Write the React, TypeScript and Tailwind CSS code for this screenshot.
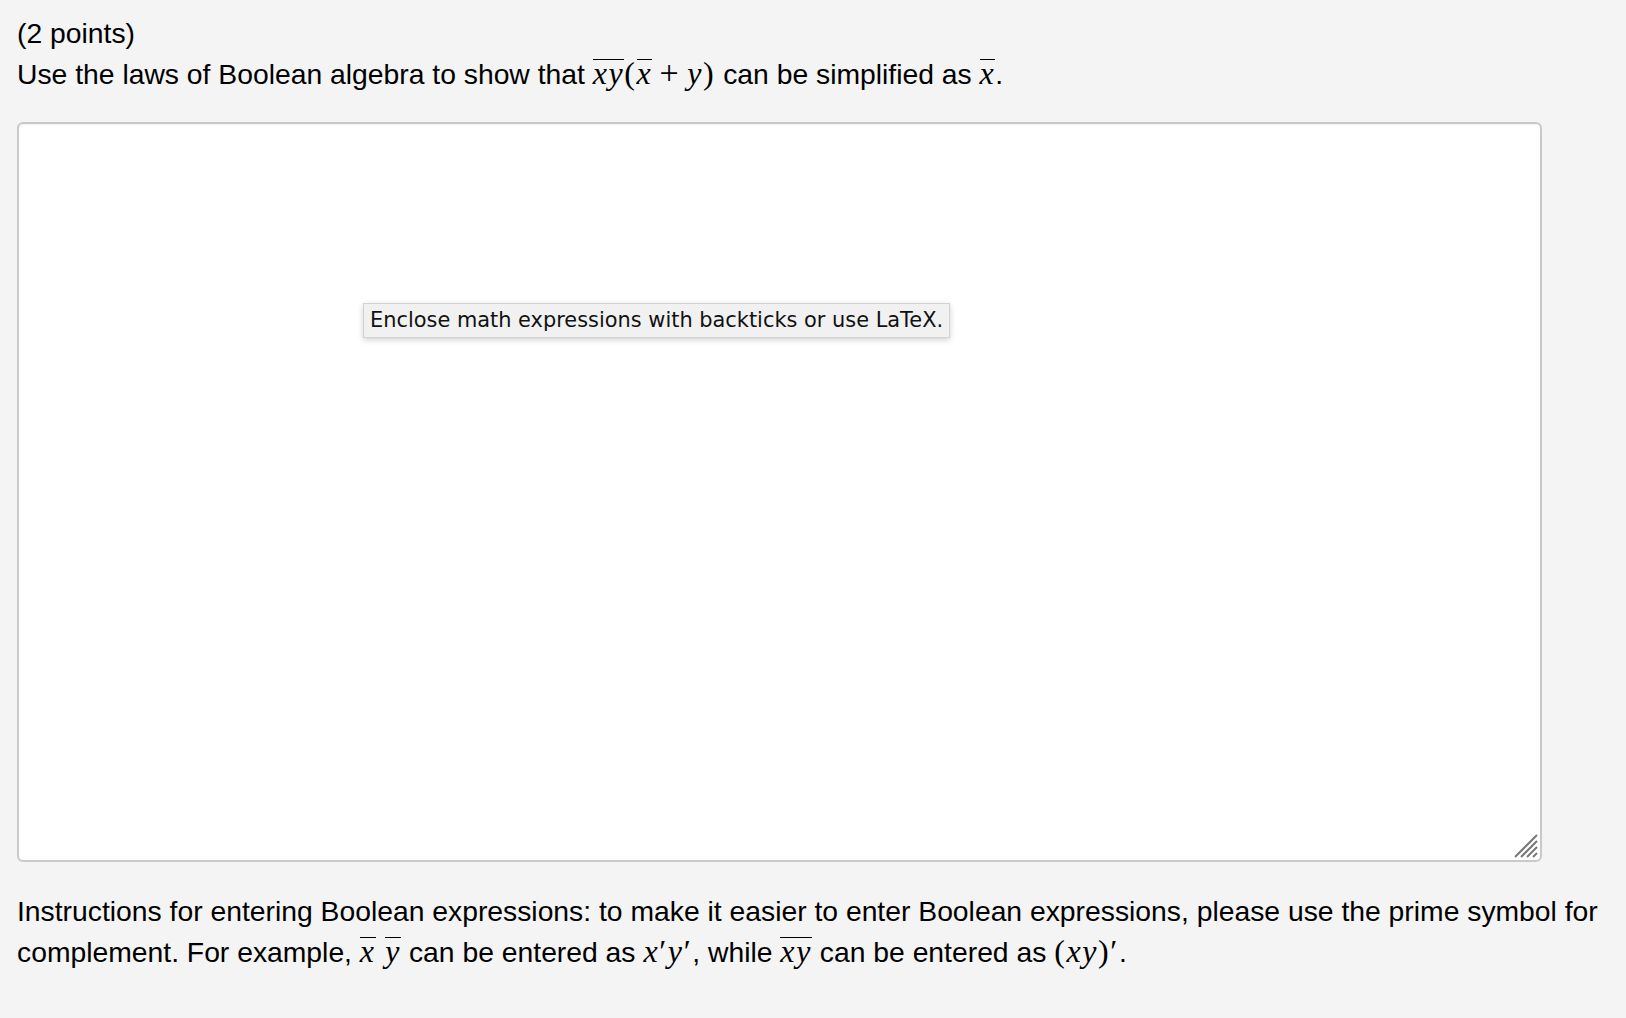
import React from "react";

type Kids = { children: React.ReactNode };

// overline used for the complement bars
const Bar = ({ children }: Kids) => (
  <span className="inline-block border-t-[1.5px] border-black leading-[0.82]">{children}</span>
);

const M = ({ children }: Kids) => (
  <span className="font-['Liberation_Serif',serif] text-[32px] tracking-[0.05em]">{children}</span>
);

const V = ({ children }: Kids) => <i className="italic">{children}</i>;

export default function App() {
  return (
    <div className="min-h-screen bg-[#f4f4f4] font-['Liberation_Sans',Arial,sans-serif] text-[28.3px] leading-[40px] text-black">
      <div className="border-b-2 border-[#e1e1e1] px-[17px] pt-[13px] pb-[46px]">
        <div>(2 points)</div>
        <div>
          Use the laws of Boolean algebra to show that{" "}
          <M>
            <Bar>
              <V>xy</V>
            </Bar>
            (
            <Bar>
              <V>x</V>
            </Bar>
            <span className="mx-[7px] text-[34px]">+</span>
            <V>y</V>)
          </M>{" "}
          can be simplified as{" "}
          <M>
            <Bar>
              <V>x</V>
            </Bar>
          </M>
          .
        </div>

        {/* answer box */}
        <div className="relative mt-[28px] h-[740px] w-[1525px]">
          <textarea className="block h-full w-full resize-none rounded-md border-2 border-[#c9c9c9] bg-white shadow-[inset_0_1px_2px_rgba(0,0,0,0.06)] outline-none" />
          <div className="absolute left-[346px] top-[181px] flex h-[35px] items-center border border-[#d2d2d2] bg-[#f1f1f1] px-[6px] font-['DejaVu_Sans',sans-serif] text-[20.9px] leading-none text-[#111] shadow-[0_2px_6px_rgba(0,0,0,0.18)]">
            Enclose math expressions with backticks or use LaTeX.
          </div>
          <svg
            className="absolute bottom-[4px] right-[4px]"
            width="24"
            height="24"
            viewBox="0 0 24 24"
            fill="none"
            stroke="#777"
            strokeWidth="2"
          >
            <path d="M1 23 L23 1" />
            <path d="M7 23 L23 7" />
            <path d="M13 23 L23 13" />
            <path d="M19 23 L23 19" />
          </svg>
        </div>

        <p className="mt-[29px]">
          Instructions for entering Boolean expressions: to make it easier to enter Boolean expressions, please use
          the prime symbol for complement. For example,{" "}
          <M>
            <Bar>
              <V>x</V>
            </Bar>{" "}
            <Bar>
              <V>y</V>
            </Bar>
          </M>{" "}
          can be entered as{" "}
          <M>
            <V>x</V>′<V>y</V>′
          </M>
          , while{" "}
          <M>
            <Bar>
              <V>xy</V>
            </Bar>
          </M>{" "}
          can be entered as{" "}
          <M>
            (<V>xy</V>)′
          </M>
          .
        </p>
      </div>
    </div>
  );
}
